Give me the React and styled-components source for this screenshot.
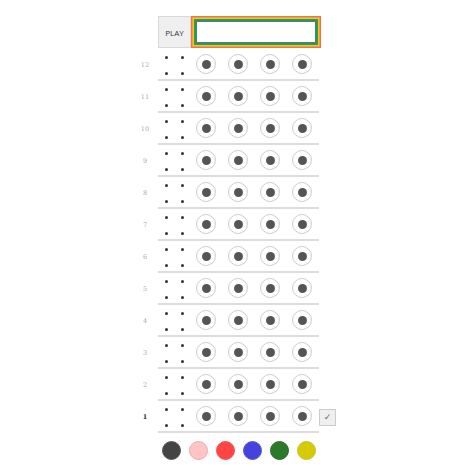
import styled, { createGlobalStyle } from "styled-components";

const GlobalStyle = createGlobalStyle`
  body {
    margin: 0;
    background: #fff;
    font-family: "Open Sans", "Liberation Sans", sans-serif;
  }
  * {
    box-sizing: border-box;
  }
`;

const Page = styled.div`
  display: flex;
  flex-direction: column;
  align-items: center;
  padding-top: 16px;
`;

const Board = styled.div`
  display: grid;
  grid-template-columns: 26px 161px 22px;
  margin-left: -1px;
`;

const Side = styled.div`
  display: flex;
  align-items: center;
  justify-content: ${(p) => (p.right ? "flex-start" : "center")};
  font-family: "DejaVu Serif", "Liberation Serif", serif;
  font-size: 6.5px;
  color: ${(p) => (p.active ? "#333" : "#aaa")};
  font-weight: ${(p) => (p.active ? "bold" : "normal")};
`;

const Header = styled.div`
  display: flex;
  height: 33px;
  padding-bottom: 1px;
`;

const PlayButton = styled.button`
  width: 33px;
  height: 32px;
  padding: 0;
  background: #efefef;
  border: 1px solid #d8d8d8;
  font-family: "Open Sans", "Liberation Sans", sans-serif;
  font-size: 8px;
  font-weight: 400;
  color: #333;
`;

const CodeBox = styled.div`
  flex: 1;
  margin-right: -2px;
  background: #fff;
  border: 1px solid #f07060;
  box-shadow: inset 0 0 0 1px #f0a030, inset 0 0 0 2px #e8d020,
    inset 0 0 0 4px #3a9a3a, inset 0 0 0 5px #3f7fa0;
`;

const Cells = styled.div`
  display: flex;
  height: 32px;
  border-bottom: 2px solid #ddd;
`;

const Hints = styled.div`
  width: 32px;
  display: grid;
  grid-template-columns: 16px 16px;
  grid-template-rows: 16px 16px;
  place-items: center;
`;

const HintDot = styled.span`
  width: 3px;
  height: 3px;
  border-radius: 50%;
  background: #333;
`;

const Slot = styled.div`
  width: 32px;
  display: flex;
  align-items: center;
  justify-content: center;
`;

const Hole = styled.div`
  width: 20px;
  height: 20px;
  border-radius: 50%;
  border: 1px solid #ccc;
  display: flex;
  align-items: center;
  justify-content: center;
`;

const Peg = styled.span`
  width: 9px;
  height: 9px;
  border-radius: 50%;
  background: #555;
`;

const CheckButton = styled.button`
  width: 17px;
  height: 17px;
  padding: 0;
  background: #efefef;
  border: 1px solid #ccc;
  color: #666;
  font-size: 9px;
  line-height: 1;
  font-family: "DejaVu Sans", sans-serif;
`;

const Palette = styled.div`
  display: flex;
  gap: 8px;
  margin-top: 8px;
  margin-left: 4px;
`;

const Swatch = styled.span`
  width: 19px;
  height: 19px;
  border-radius: 50%;
  background: ${(p) => p.color};
  border: 1px solid ${(p) => p.edge};
`;

const rows = [12, 11, 10, 9, 8, 7, 6, 5, 4, 3, 2, 1];

const colors = [
  ["#444", "#555"],
  ["#ffc4c4", "#eaa"],
  ["#f44", "#e55"],
  ["#44d", "#55c"],
  ["#2a7a2a", "#2a6a2a"],
  ["#d4cc00", "#c8c030"],
];

const App = () => {
  return (
    <>
      <GlobalStyle />
      <Page>
        <Board>
          <Side />
          <Header>
            <PlayButton>PLAY</PlayButton>
            <CodeBox />
          </Header>
          <Side />
          {rows.map((n) => (
            <>
              <Side key={"l" + n} active={n === 1}>
                {n}
              </Side>
              <Cells key={"c" + n}>
                <Hints>
                  <HintDot />
                  <HintDot />
                  <HintDot />
                  <HintDot />
                </Hints>
                {[0, 1, 2, 3].map((i) => (
                  <Slot key={i}>
                    <Hole>
                      <Peg />
                    </Hole>
                  </Slot>
                ))}
              </Cells>
              <Side key={"r" + n} right>
                {n === 1 && <CheckButton>✓</CheckButton>}
              </Side>
            </>
          ))}
        </Board>
        <Palette>
          {colors.map(([c, e]) => (
            <Swatch key={c} color={c} edge={e} />
          ))}
        </Palette>
      </Page>
    </>
  );
};

export default App;
